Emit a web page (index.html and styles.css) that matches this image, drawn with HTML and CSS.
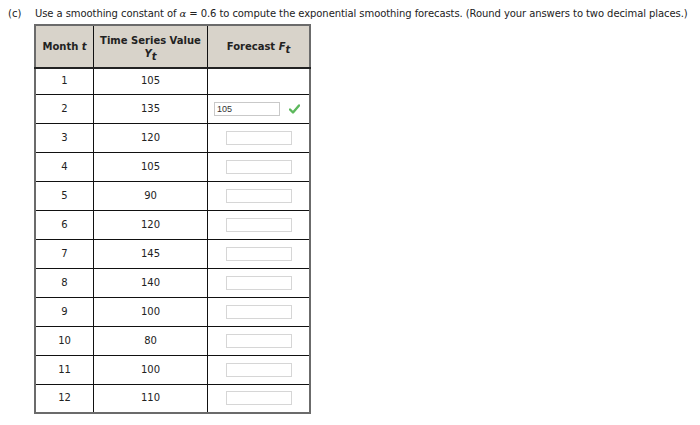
FILE: index.html
```html
<!DOCTYPE html>
<html>
<head>
<meta charset="utf-8">
<link rel="stylesheet" href="styles.css">
</head>
<body>
<div class="q">
  <div class="qline"><span class="lbl">(c)</span><span class="qtext">Use a smoothing constant of <i class="alpha">α</i> = 0.6 to compute the exponential smoothing forecasts. (Round your answers to two decimal places.)</span></div>
  <table class="grid">
    <thead>
      <tr>
        <th class="c1">Month <i>t</i></th>
        <th class="c2">Time Series Value<br><i>Y<sub>t</sub></i></th>
        <th class="c3">Forecast <i>F<sub>t</sub></i></th>
      </tr>
    </thead>
    <tbody>
      <tr class="first"><td>1</td><td>105</td><td></td></tr>
      <tr><td>2</td><td>135</td><td class="ans"><span class="filled">105</span><svg class="check" width="11" height="10" viewBox="0 0 11 10"><path d="M1 5.5 L4 8.5 L10 1.5" fill="none" stroke="#5cb85c" stroke-width="2.4" stroke-linecap="round" stroke-linejoin="round"/></svg></td></tr>
      <tr><td>3</td><td>120</td><td><span class="box"></span></td></tr>
      <tr><td>4</td><td>105</td><td><span class="box"></span></td></tr>
      <tr><td>5</td><td>90</td><td><span class="box"></span></td></tr>
      <tr><td>6</td><td>120</td><td><span class="box"></span></td></tr>
      <tr><td>7</td><td>145</td><td><span class="box"></span></td></tr>
      <tr><td>8</td><td>140</td><td><span class="box"></span></td></tr>
      <tr><td>9</td><td>100</td><td><span class="box"></span></td></tr>
      <tr><td>10</td><td>80</td><td><span class="box"></span></td></tr>
      <tr><td>11</td><td>100</td><td><span class="box"></span></td></tr>
      <tr><td>12</td><td>110</td><td><span class="box"></span></td></tr>
    </tbody>
  </table>
</div>
</body>
</html>
```
FILE: styles.css
```css
html, body {
  margin: 0;
  padding: 0;
  background: #fff;
}
body {
  font-family: "DejaVu Sans", Verdana, sans-serif;
  font-size: 10px;
  color: #222;
}
.q {
  padding: 7px 0 0 8px;
}
.qline {
  display: flex;
  line-height: 13px;
  white-space: nowrap;
}
.lbl {
  width: 27px;
}
.qtext {
  letter-spacing: -0.08px;
}
.alpha {
  font-family: "DejaVu Serif", serif;
}
.grid {
  margin: 4px 0 0 26px;
  border-collapse: collapse;
  border: 2px solid #6b6b6b;
}
.grid th {
  background: #d8d3ca;
  font-weight: bold;
  height: 41px;
  padding: 0;
  border: 1px solid #111;
  border-bottom: 2px solid #222;
  font-size: 10px;
  line-height: 13px;
  vertical-align: middle;
}
.grid th sub {
  font-size: 10px;
  vertical-align: -3px;
  line-height: 0;
}
.c1 { width: 57px; }
.c2 { width: 113px; }
.c3 { width: 101px; }
.grid tbody tr { height: 29px; }
.grid tbody tr.first { height: 26px; }
.grid td {
  border: 1px solid #111;
  text-align: center;
  padding: 0;
  line-height: 12px;
  vertical-align: middle;
}
.box {
  display: inline-block;
  width: 64px;
  height: 12px;
  border: 1px solid #d6d6d6;
  vertical-align: middle;
}
.ans {
  text-align: left !important;
}
.filled {
  display: inline-block;
  width: 62px;
  height: 12px;
  border: 1px solid #c9c9c9;
  margin-left: 6px;
  padding-left: 2px;
  font-family: "Liberation Sans", Arial, sans-serif;
  font-size: 9px;
  line-height: 12px;
  vertical-align: middle;
  color: #333;
}
.check {
  vertical-align: middle;
  margin-left: 9px;
}
```
